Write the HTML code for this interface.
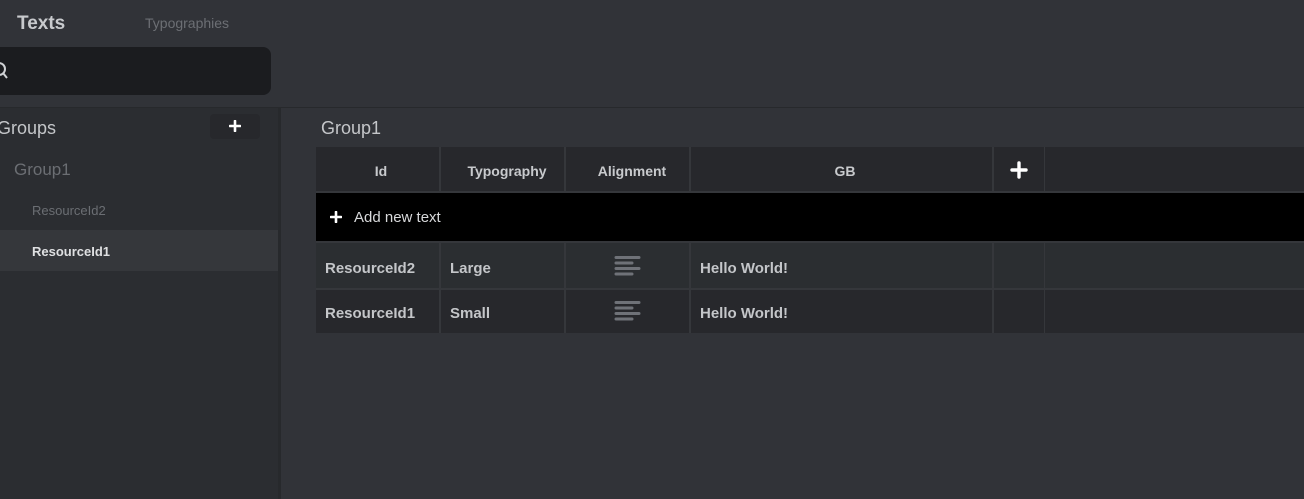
<!DOCTYPE html>
<html><head><meta charset="utf-8"><style>
*{margin:0;padding:0;box-sizing:border-box}
body{width:1304px;height:499px;overflow:hidden;background:#313338;font-family:"Liberation Sans",sans-serif;position:relative}
.a{position:absolute}
.t{position:absolute;white-space:nowrap}
</style></head><body>
<div class="a" style="left:0;top:107px;width:1304px;height:1px;background:#27292c"></div>
<div class="t" style="left:17px;top:13px;font-size:19px;font-weight:bold;color:#c8cacd">Texts</div>
<div class="t" style="left:145px;top:15px;font-size:14px;color:#6c6f74">Typographies</div>
<div class="a" style="left:-10px;top:47px;width:281px;height:48px;background:#1b1c1f;border-radius:8px"></div>
<svg class="a" style="left:-4px;top:60px" width="18" height="22"><circle cx="3" cy="9" r="6" fill="none" stroke="#d0d2d5" stroke-width="2"/><line x1="7" y1="13" x2="11" y2="18" stroke="#d0d2d5" stroke-width="2"/></svg>
<div class="a" style="left:0;top:108px;width:278px;height:391px;background:#2b2d31"></div>
<div class="a" style="left:278px;top:108px;width:3px;height:391px;background:#27292c"></div>
<div class="t" style="left:-3px;top:118px;font-size:18px;color:#c4c6c9">Groups</div>
<div class="a" style="left:210px;top:114px;width:50px;height:25px;background:#27282c;border-radius:4px"></div>
<svg class="a" style="left:229px;top:120px" width="12" height="12"><path d="M6 1V11M1 6H11" stroke="#fff" stroke-width="2.6" stroke-linecap="round"/></svg>
<div class="t" style="left:14px;top:160px;font-size:17px;color:#6b6e73">Group1</div>
<div class="t" style="left:32px;top:203px;font-size:13px;color:#6b6e73">ResourceId2</div>
<div class="a" style="left:0;top:230px;width:278px;height:41px;background:#35373b"></div>
<div class="t" style="left:32px;top:244px;font-size:13px;font-weight:bold;color:#dfe0e2">ResourceId1</div>
<div class="t" style="left:321px;top:118px;font-size:18px;color:#c4c6c9">Group1</div>
<div class="a" style="left:316px;top:147px;width:988px;height:45px;background:#27282c"></div>
<div class="a" style="left:316px;top:193px;width:988px;height:48px;background:#000"></div>
<div class="a" style="left:316px;top:243px;width:988px;height:45px;background:#2b2e31"></div>
<div class="a" style="left:316px;top:290px;width:988px;height:43px;background:#27282c"></div>
<div class="a" style="left:316px;top:191px;width:988px;height:2px;background:#35373b"></div>
<div class="a" style="left:316px;top:241px;width:988px;height:2px;background:#35373b"></div>
<div class="a" style="left:316px;top:288px;width:988px;height:2px;background:#35373b"></div>
<div class="a" style="left:439px;top:147px;width:2px;height:44px;background:#35373b"></div>
<div class="a" style="left:564px;top:147px;width:2px;height:44px;background:#35373b"></div>
<div class="a" style="left:689px;top:147px;width:2px;height:44px;background:#35373b"></div>
<div class="a" style="left:992px;top:147px;width:2px;height:44px;background:#35373b"></div>
<div class="a" style="left:1044px;top:147px;width:1px;height:44px;background:#35373b"></div>
<div class="a" style="left:439px;top:243px;width:2px;height:90px;background:#35373b"></div>
<div class="a" style="left:564px;top:243px;width:2px;height:90px;background:#35373b"></div>
<div class="a" style="left:689px;top:243px;width:2px;height:90px;background:#35373b"></div>
<div class="a" style="left:992px;top:243px;width:2px;height:90px;background:#35373b"></div>
<div class="a" style="left:1044px;top:243px;width:1px;height:90px;background:#35373b"></div>
<div class="t" style="left:319px;width:124px;text-align:center;top:163px;font-size:14px;font-weight:bold;color:#c8cacd">Id</div>
<div class="t" style="left:445px;width:124px;text-align:center;top:163px;font-size:14px;font-weight:bold;color:#c8cacd">Typography</div>
<div class="t" style="left:570px;width:124px;text-align:center;top:163px;font-size:14px;font-weight:bold;color:#c8cacd">Alignment</div>
<div class="t" style="left:694px;width:302px;text-align:center;top:163px;font-size:14px;font-weight:bold;color:#c8cacd">GB</div>
<svg class="a" style="left:1010px;top:161px" width="18" height="18"><path d="M9 2V16M2 9H16" stroke="#fff" stroke-width="3.4" stroke-linecap="round"/></svg>
<svg class="a" style="left:330px;top:211px" width="12" height="12"><path d="M6 1V11M1 6H11" stroke="#fff" stroke-width="2.6" stroke-linecap="round"/></svg>
<div class="t" style="left:354px;top:209px;font-size:15px;color:#d8d9db">Add new text</div>
<div class="t" style="left:325px;top:260px;font-size:15px;font-weight:bold;color:#c4c6c9">ResourceId2</div>
<div class="t" style="left:450px;top:260px;font-size:15px;font-weight:bold;color:#c4c6c9">Large</div>
<div class="t" style="left:700px;top:260px;font-size:15px;font-weight:bold;color:#c4c6c9">Hello World!</div>
<div class="t" style="left:325px;top:305px;font-size:15px;font-weight:bold;color:#c4c6c9">ResourceId1</div>
<div class="t" style="left:450px;top:305px;font-size:15px;font-weight:bold;color:#c4c6c9">Small</div>
<div class="t" style="left:700px;top:305px;font-size:15px;font-weight:bold;color:#c4c6c9">Hello World!</div>
<svg class="a" style="left:614px;top:255px" width="28" height="22"><g stroke="#6f7278" stroke-width="3" stroke-linecap="round"><line x1="2" y1="2.5" x2="25" y2="2.5"/><line x1="2" y1="8" x2="18" y2="8"/><line x1="2" y1="13.5" x2="25" y2="13.5"/><line x1="2" y1="19" x2="18" y2="19"/></g></svg>
<svg class="a" style="left:614px;top:300px" width="28" height="22"><g stroke="#6f7278" stroke-width="3" stroke-linecap="round"><line x1="2" y1="2.5" x2="25" y2="2.5"/><line x1="2" y1="8" x2="18" y2="8"/><line x1="2" y1="13.5" x2="25" y2="13.5"/><line x1="2" y1="19" x2="18" y2="19"/></g></svg>
</body></html>
